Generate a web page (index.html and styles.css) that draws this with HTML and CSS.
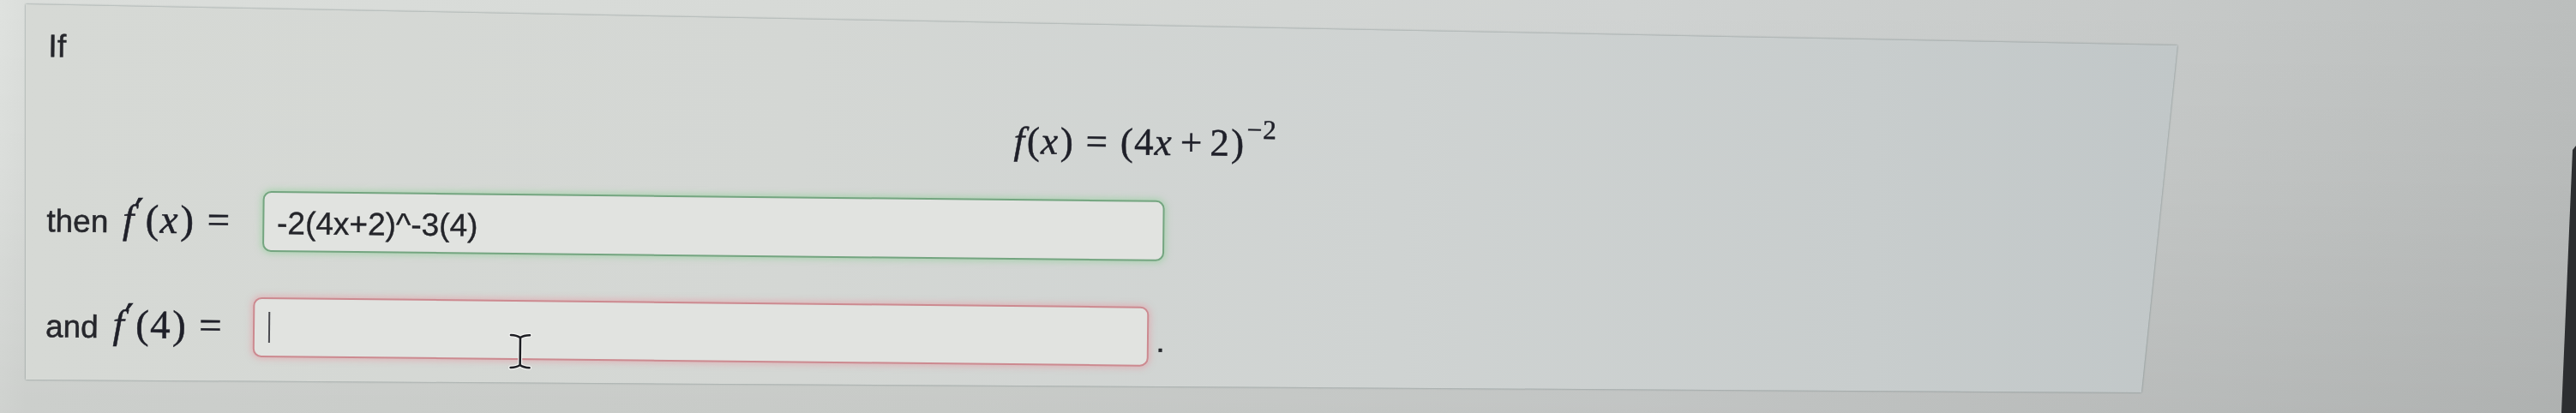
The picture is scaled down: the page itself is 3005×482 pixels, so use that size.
FILE: index.html
```html
<!DOCTYPE html>
<html lang="en">
<head>
<meta charset="utf-8">
<title>Derivative question</title>
<link rel="stylesheet" href="styles.css">
</head>
<body>
<div class="scene">
  <div class="card-wrap">
    <div class="card">
      <div class="content">
        <div class="if-line">If</div>
        <div class="display">
          <span class="math"><i class="mi f">f</i><span class="mo">(</span><i class="mi">x</i><span class="mo">)</span><span class="rel">=</span><span class="mo">(</span><span class="mn">4</span><i class="mi">x</i><span class="bin">+</span><span class="mn">2</span><span class="mo">)</span><sup class="sup">−2</sup></span>
        </div>
        <div class="row row-then">
          <span class="label"><span class="word">then</span><span class="math"><i class="mi f">f</i><span class="prime">′</span><span class="mo">(</span><i class="mi">x</i><span class="mo">)</span><span class="rel">=</span></span></span>
          <div class="answer answer-ok"><span class="answer-text">-2(4x+2)^-3(4)</span></div>
        </div>
        <div class="row row-and">
          <span class="label"><span class="word">and</span><span class="math"><i class="mi f">f</i><span class="prime">′</span><span class="mo">(</span><span class="mn">4</span><span class="mo">)</span><span class="rel">=</span></span></span>
          <div class="answer answer-bad">
            <span class="caret"></span>
            <svg class="ibeam" width="28" height="44" viewBox="0 0 28 44" aria-hidden="true">
              <path d="M3 3 Q10 3 14 6 Q18 3 25 3 M14 6 V38 M3 41 Q10 41 14 38 Q18 41 25 41" fill="none" stroke="#f4f4f2" stroke-width="5" stroke-linecap="round"/>
              <path d="M3 3 Q10 3 14 6 Q18 3 25 3 M14 6 V38 M3 41 Q10 41 14 38 Q18 41 25 41" fill="none" stroke="#1e1f24" stroke-width="2.6" stroke-linecap="round"/>
            </svg>
          </div>
          <span class="period">.</span>
        </div>
      </div>
    </div>
  </div>
  <div class="bezel"></div>
</div>
</body>
</html>
```
FILE: styles.css
```css
html, body {
  margin: 0;
  padding: 0;
}
body {
  width: 3005px;
  height: 482px;
  overflow: hidden;
  background:
    linear-gradient(to bottom, rgba(0,0,0,0) 0, rgba(0,0,0,0.02) 40%, rgba(0,0,0,0.07) 100%),
    linear-gradient(to right, #dfe2df 0, #dbdedb 30px, #d6d9d6 1100px, #d0d3d2 1900px, #c6c9c8 2550px, #bbbebd 3005px);
  font-family: "Liberation Sans", Arial, sans-serif;
  color: #26272c;
}
.scene {
  display: flex;
  height: 482px;
}
.card-wrap {
  margin-left: 30px;
  margin-top: 5px;
  width: 2510px;
  height: 453px;
  filter: drop-shadow(0 0 1.2px rgba(110, 125, 125, 0.85));
}
.card {
  width: 2510px;
  height: 453px;
  clip-path: polygon(0 0, 2510px 48px, 2468px 453px, 0 438px);
  background: linear-gradient(to right, #d6d9d5 0, #d4d7d4 900px, #cfd3d2 1600px, #c8cdcd 2150px, #c1c7c8 2510px);
}
.content {
  display: flex;
  flex-direction: column;
  padding: 31px 27px 0 27px;
  transform: rotate(0.6deg);
  transform-origin: 0 0;
  -webkit-text-stroke: 0.5px currentColor;
}
.if-line {
  font-size: 37px;
  line-height: 36px;
  height: 36px;
}
.math {
  font-family: "Liberation Serif", "Times New Roman", serif;
  font-size: 47px;
  color: #1f2029;
  white-space: nowrap;
}
.mi {
  font-style: italic;
  letter-spacing: 0.03em;
}
.mi.f {
  display: inline-block;
  padding-left: 0.08em;
  margin-right: 0;
}
.mo {
  display: inline-block;
  margin: 0 0.03em;
}
.mn {
  letter-spacing: 0.02em;
}
.rel {
  display: inline-block;
  margin: 0 0.3em;
}
.bin {
  display: inline-block;
  margin: 0 0.2em;
}
.prime {
  display: inline-block;
  font-family: "DejaVu Sans", sans-serif;
  font-size: 1em;
  vertical-align: 0.12em;
  line-height: 0;
  margin-left: -0.02em;
  margin-right: 0.02em;
  -webkit-text-stroke: 0.8px currentColor;
}
.sup {
  font-size: 0.7em;
  vertical-align: 0.62em;
  line-height: 0;
  letter-spacing: 0.03em;
  margin-left: 0.06em;
}
.display {
  margin-top: 50px;
  height: 60px;
  line-height: 60px;
  padding-left: 102px;
  text-align: center;
}
.display .math {
  font-size: 45px;
}
.row {
  display: flex;
  align-items: center;
}
.row-then {
  margin-top: 38px;
}
.row-and {
  margin-top: 53px;
}
.label {
  display: flex;
  align-items: baseline;
  font-size: 37px;
  line-height: 44px;
}
.word {
  margin-right: 13px;
}
.row-then .label {
  margin-right: 24px;
}
.row-and .label {
  margin-right: 22px;
}
.answer {
  position: relative;
  box-sizing: border-box;
  display: flex;
  align-items: center;
  border-radius: 10px;
  background: #e1e3e0;
  -webkit-text-stroke: 0;
}
.answer-ok {
  width: 1052px;
  height: 71px;
  border: 2px solid #74a580;
  box-shadow: 0 0 7px 2px rgba(140, 205, 150, 0.55);
  padding-left: 15px;
}
.answer-text {
  font-size: 37px;
  color: #24252a;
  padding-top: 4px;
  -webkit-text-stroke: 0.4px currentColor;
}
.answer-bad {
  width: 1045px;
  height: 70px;
  border: 2px solid #cc8a90;
  box-shadow: 0 0 7px 2px rgba(232, 150, 160, 0.5);
  padding-left: 16px;
}
.caret {
  display: inline-block;
  width: 2px;
  height: 36px;
  background: #4a4b50;
}
.ibeam {
  position: absolute;
  left: 296px;
  top: 36px;
}
.period {
  font-size: 36px;
  margin-left: 9px;
  padding-top: 12px;
}
.bezel {
  margin-left: auto;
  width: 17px;
  height: 482px;
  background: #2c2e30;
  clip-path: polygon(13px 175px, 17px 170px, 17px 482px, 0 482px);
}
```
